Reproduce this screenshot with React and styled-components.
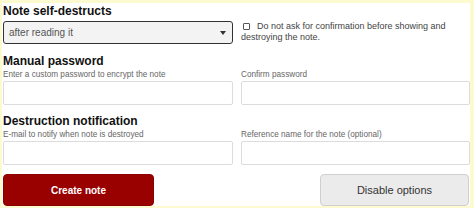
import React from "react";
import styled, { createGlobalStyle } from "styled-components";

const Global = createGlobalStyle`
  html, body { margin: 0; padding: 0; background: #fbfbcf; }
  body { font-family: "Liberation Sans", Arial, sans-serif; }
  * { box-sizing: border-box; }
`;

const Panel = styled.div`
  width: 468px;
  height: 203px;
  margin: 3px 0 0 2px;
  background: #ffffff;
  padding: 1px 0 0 1px;
  display: flex;
  flex-direction: column;
  overflow: hidden;
`;

const Row = styled.div`
  display: grid;
  grid-template-columns: 230px 229px;
  column-gap: 8px;
  margin-top: ${(p) => p.$mt || 0}px;
`;

const Col = styled.div`
  display: flex;
  flex-direction: column;
  padding-top: ${(p) => p.$pt || 0}px;
`;

const Heading = styled.div`
  font-size: 12px;
  line-height: 14px;
  height: 14px;
  font-weight: bold;
  color: #111;
  margin-top: ${(p) => p.$mt || 0}px;
`;

const SelectBox = styled.div`
  margin-top: 3px;
  height: 23px;
  border: 1px solid #333;
  border-radius: 3px;
  background: #f3f3f3;
  display: flex;
  align-items: center;
  justify-content: space-between;
  padding: 0 6px 0 5px;
  font-size: 10px;
  color: #555;
`;

const Arrow = styled.span`
  width: 0;
  height: 0;
  border-left: 3px solid transparent;
  border-right: 3px solid transparent;
  border-top: 4px solid #333;
  margin-top: 1px;
`;

const CheckLine = styled.label`
  display: block;
  font-size: 9px;
  line-height: 11px;
  color: #444;
`;

const Box = styled.span`
  display: inline-block;
  width: 7px;
  height: 7px;
  border: 1px solid #555;
  border-radius: 1px;
  margin: 0 7px 0 2px;
  vertical-align: -1px;
  background: #fff;
`;

const Label = styled.div`
  font-size: 8.2px;
  line-height: 10px;
  height: 10px;
  color: #666;
  white-space: nowrap;
  margin-top: 2px;
`;

const Input = styled.div`
  margin-top: 1px;
  height: 24px;
  border: 1px solid #dcdcdc;
  border-radius: 2px;
  background: #fff;
`;

const Buttons = styled.div`
  display: flex;
  justify-content: space-between;
  margin-top: 9px;
  padding-right: 1px;
`;

const Button = styled.div`
  height: 32px;
  width: ${(p) => p.$w}px;
  border-radius: 4px;
  display: flex;
  align-items: center;
  justify-content: center;
  font-size: ${(p) => (p.$primary ? 10 : 11)}px;
  font-weight: ${(p) => (p.$primary ? "bold" : "normal")};
  color: ${(p) => (p.$primary ? "#fff" : "#333")};
  background: ${(p) => (p.$primary ? "#990000" : "#ebebeb")};
  border: 1px solid ${(p) => (p.$primary ? "#8a0000" : "#cfcfcf")};
`;

export default function App() {
  return (
    <>
      <Global />
      <Panel>
        <Row>
          <Col>
            <Heading>Note self-destructs</Heading>
            <SelectBox>
              <span>after reading it</span>
              <Arrow />
            </SelectBox>
          </Col>
          <Col $pt={17}>
            <CheckLine>
              <Box />
              Do not ask for confirmation before showing and destroying the note.
            </CheckLine>
          </Col>
        </Row>
        <Heading $mt={10}>Manual password</Heading>
        <Row>
          <Col>
            <Label>Enter a custom password to encrypt the note</Label>
            <Input />
          </Col>
          <Col>
            <Label>Confirm password</Label>
            <Input />
          </Col>
        </Row>
        <Heading $mt={9}>Destruction notification</Heading>
        <Row>
          <Col>
            <Label>E-mail to notify when note is destroyed</Label>
            <Input />
          </Col>
          <Col>
            <Label>Reference name for the note (optional)</Label>
            <Input />
          </Col>
        </Row>
        <Buttons>
          <Button $primary $w={151}>Create note</Button>
          <Button $w={149}>Disable options</Button>
        </Buttons>
      </Panel>
    </>
  );
}
